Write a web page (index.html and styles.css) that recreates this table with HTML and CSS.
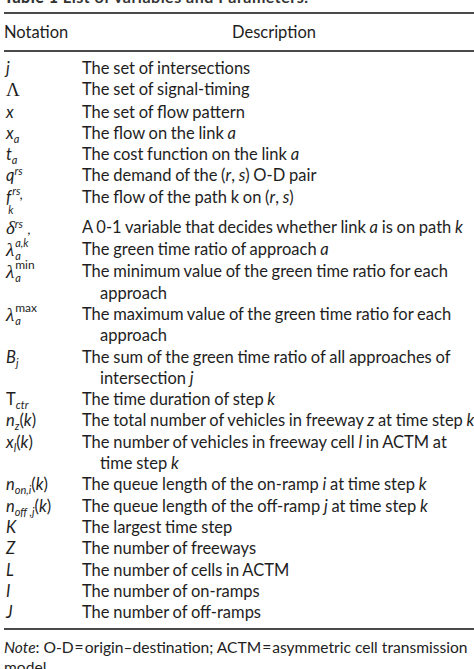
FILE: index.html
```html
<!DOCTYPE html>
<html lang="en">
<head>
<meta charset="utf-8">
<title>List of variables and Parameters</title>
<link rel="stylesheet" href="styles.css">
</head>
<body>
<div class="page">
  <div class="caption"><b>Table 1</b> List of variables and Parameters.</div>
  <table class="vars">
    <colgroup><col class="w1"><col class="w2"></colgroup>
    <thead>
      <tr><th class="c1">Notation</th><th class="c2">Description</th></tr>
    </thead>
    <tbody>
      <tr><td class="c1"><i>j</i></td><td class="c2">The set of intersections</td></tr>
      <tr><td class="c1"><span class="gr">Λ</span></td><td class="c2">The set of signal-timing</td></tr>
      <tr><td class="c1"><i>x</i></td><td class="c2">The set of flow pattern</td></tr>
      <tr><td class="c1"><i>x</i><sub>a</sub></td><td class="c2">The flow on the link <i>a</i></td></tr>
      <tr><td class="c1"><i>t</i><sub>a</sub></td><td class="c2">The cost function on the link <i>a</i></td></tr>
      <tr><td class="c1"><i>q</i><sup>rs</sup></td><td class="c2">The demand of the (<i>r</i>, <i>s</i>) O-D pair</td></tr>
      <tr class="tall"><td class="c1"><span class="ss"><i>f</i><span class="st"><span class="up">rs</span><span class="dn">k</span></span><span class="cm">,</span></span></td><td class="c2">The flow of the path k on (<i>r</i>, <i>s</i>)</td></tr>
      <tr><td class="c1"><span class="gr gi">δ</span><sup>rs</sup> <span class="cm2">,</span></td><td class="c2">A 0-1 variable that decides whether link <i>a</i> is on path <i>k</i></td></tr>
      <tr><td class="c1"><span class="ss"><span class="gr gi">λ</span><span class="st"><span class="up">a,k</span><span class="dn">a</span></span></span></td><td class="c2">The green time ratio of approach <i>a</i></td></tr>
      <tr><td class="c1"><span class="ss"><span class="gr gi">λ</span><span class="st"><span class="up nu">min</span><span class="dn">a</span></span></span></td><td class="c2">The minimum value of the green time ratio for each<span class="cont">approach</span></td></tr>
      <tr><td class="c1"><span class="ss"><span class="gr gi">λ</span><span class="st"><span class="up nu">max</span><span class="dn">a</span></span></span></td><td class="c2">The maximum value of the green time ratio for each<span class="cont">approach</span></td></tr>
      <tr><td class="c1"><i>B</i><sub>j</sub></td><td class="c2">The sum of the green time ratio of all approaches of<span class="cont">intersection <i>j</i></span></td></tr>
      <tr><td class="c1">T<sub>ctr</sub></td><td class="c2">The time duration of step <i>k</i></td></tr>
      <tr><td class="c1"><i>n</i><sub>z</sub>(<i>k</i>)</td><td class="c2">The total number of vehicles in freeway <i>z</i> at time step <i>k</i></td></tr>
      <tr><td class="c1"><i>x</i><sub>l</sub>(<i>k</i>)</td><td class="c2">The number of vehicles in freeway cell <i>l</i> in ACTM at<span class="cont">time step <i>k</i></span></td></tr>
      <tr><td class="c1"><i>n</i><sub>on,i</sub>(<i>k</i>)</td><td class="c2">The queue length of the on-ramp <i>i</i> at time step <i>k</i></td></tr>
      <tr><td class="c1"><i>n</i><sub>off ,j</sub>(<i>k</i>)</td><td class="c2">The queue length of the off-ramp <i>j</i> at time step <i>k</i></td></tr>
      <tr><td class="c1"><i>K</i></td><td class="c2">The largest time step</td></tr>
      <tr><td class="c1"><i>Z</i></td><td class="c2">The number of freeways</td></tr>
      <tr><td class="c1"><i>L</i></td><td class="c2">The number of cells in ACTM</td></tr>
      <tr><td class="c1"><i>I</i></td><td class="c2">The number of on-ramps</td></tr>
      <tr><td class="c1"><i>J</i></td><td class="c2">The number of off-ramps</td></tr>
    </tbody>
  </table>
  <p class="note"><span class="nl"><i>Note</i>: O-D&#8202;=&#8202;origin–destination; ACTM&#8202;=&#8202;asymmetric cell transmission</span><span class="nl">model</span></p>
</div>
</body>
</html>
```

FILE: styles.css
```css
html, body {
  margin: 0;
  padding: 0;
  background: #ffffff;
}
body {
  font-family: Lato, "Noto Sans", sans-serif;
  color: #1e1e1e;
  width: 474px;
  height: 669px;
  overflow: hidden;
}
.page {
  padding-left: 4px;
}
.caption {
  font-weight: bold;
  font-size: 16px;
  line-height: 16px;
  margin-top: -11px;
  height: 16px;
  color: #333;
  letter-spacing: 0.5px;
  white-space: nowrap;
}
.vars {
  border-collapse: collapse;
  table-layout: fixed;
  width: 470px;
  margin-top: 7px;
  font-size: 16.5px;
}
.w1 { width: 78px; }
.w2 { width: 392px; }
.vars thead th {
  font-weight: normal;
  border-top: 2px solid #4a4a4a;
  border-bottom: 2px solid #4a4a4a;
  height: 36px;
  padding: 0;
  vertical-align: middle;
}
.vars thead th.c1 { text-align: left; }
.vars thead th.c2 { text-align: center; padding-right: 8px; }
.vars tbody tr:first-child td { padding-top: 6px; }
.vars tbody tr:last-child td { padding-bottom: 5px; border-bottom: 2px solid #4a4a4a; }
.vars td {
  padding: 0;
  line-height: 21.3px;
  vertical-align: top;
}
.vars td.c1 {
  padding-left: 2px;
  white-space: nowrap;
}
.c2 {
  white-space: nowrap;
  word-spacing: -0.5px;
}
.cont {
  display: block;
  padding-left: 18px;
}
i { font-style: italic; }
sub, sup {
  font-size: 11px;
  font-style: italic;
  line-height: 0;
}
sub { vertical-align: -4px; }
sup { vertical-align: 6px; }
.gr { font-family: "Liberation Serif", "DejaVu Serif", serif; font-size: 19px; }
.gi { font-style: italic; }
.ss { display: inline-flex; align-items: flex-start; }
.st {
  display: inline-flex;
  flex-direction: column;
  font-size: 11px;
  font-style: italic;
  line-height: 11px;
  margin-left: 1px;
}
.st .up { margin-top: -2px; }
.st .nu { font-style: normal; font-size: 12px; }
.st .dn { margin-top: 2px; }
.tall td { height: 30px; }
.tall .st .dn { margin-top: 8px; margin-left: -4px; }
.cm { font-size: 14px; line-height: 14px; margin-left: -1px; }
.cm2 { font-size: 14px; }
.note {
  margin: 7px 0 0 0;
  font-size: 15.6px;
  line-height: 20px;
  color: #222;
}
.nl {
  display: block;
  white-space: nowrap;
}
```
